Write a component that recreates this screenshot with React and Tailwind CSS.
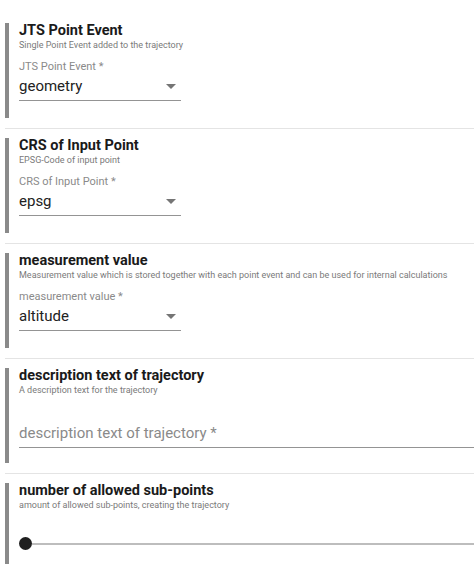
import { Fragment } from "react";

const sections = [
  {
    title: "JTS Point Event",
    hint: "Single Point Event added to the trajectory",
    kind: "select",
    label: "JTS Point Event *",
    value: "geometry",
  },
  {
    title: "CRS of Input Point",
    hint: "EPSG-Code of input point",
    kind: "select",
    label: "CRS of Input Point *",
    value: "epsg",
  },
  {
    title: "measurement value",
    hint: "Measurement value which is stored together with each point event and can be used for internal calculations",
    kind: "select",
    label: "measurement value *",
    value: "altitude",
  },
  {
    title: "description text of trajectory",
    hint: "A description text for the trajectory",
    kind: "text",
    label: "description text of trajectory *",
  },
  {
    title: "number of allowed sub-points",
    hint: "amount of allowed sub-points, creating the trajectory",
    kind: "slider",
  },
];

const SelectField = ({ label, value }) => (
  <div className="w-[162px]">
    <p className="mt-[9px] text-[11px] leading-[13px] text-[#8a8a8a]">{label}</p>
    <div className="mt-[4px] flex items-center justify-between border-b border-[#949494] pb-[5px]">
      <span className="text-[15px] leading-[18px] text-[#222]">{value}</span>
      <span className="mr-[5px] mt-[1px] h-0 w-0 border-x-[5px] border-t-[5px] border-x-transparent border-t-[#757575]" />
    </div>
  </div>
);

const TextField = ({ label }) => (
  <div className="mt-[28px] border-b border-[#949494] pb-[5px]">
    <input
      type="text"
      placeholder={label}
      className="block w-full bg-transparent text-[15px] leading-[18px] text-[#222] placeholder:text-[#8a8a8a] focus:outline-none"
    />
  </div>
);

const SliderField = () => (
  <div className="mt-[26px] flex items-center">
    <span className="h-[13px] w-[13px] shrink-0 rounded-full bg-[#1f1f1f]" />
    <span className="h-[2px] flex-1 bg-[#bdbdbd]" />
  </div>
);

export default function App() {
  return (
    <div className="min-h-screen bg-white pl-[5px] pt-[23px] font-['Roboto',sans-serif]">
      {sections.map((s, idx) => (
        <Fragment key={s.title}>
          <section
            className={`border-l-4 border-[#8a8a8a] pl-[10px] pt-[1px] ${
              s.kind === "slider" ? "h-[81px]" : "h-[95px]"
            }`}
          >
            <h2 className="text-[14.5px] font-bold leading-[14px] text-[#1a1a1a]">{s.title}</h2>
            <p className="mt-[1px] text-[9px] leading-[12px] text-[#7a7a7a]">{s.hint}</p>
            {s.kind === "select" && <SelectField label={s.label} value={s.value} />}
            {s.kind === "text" && <TextField label={s.label} />}
            {s.kind === "slider" && <SliderField />}
          </section>
          {idx < sections.length - 1 && (
            <div className="mb-[9px] mt-[10px] h-px bg-[#e4e4e4]" />
          )}
        </Fragment>
      ))}
    </div>
  );
}
